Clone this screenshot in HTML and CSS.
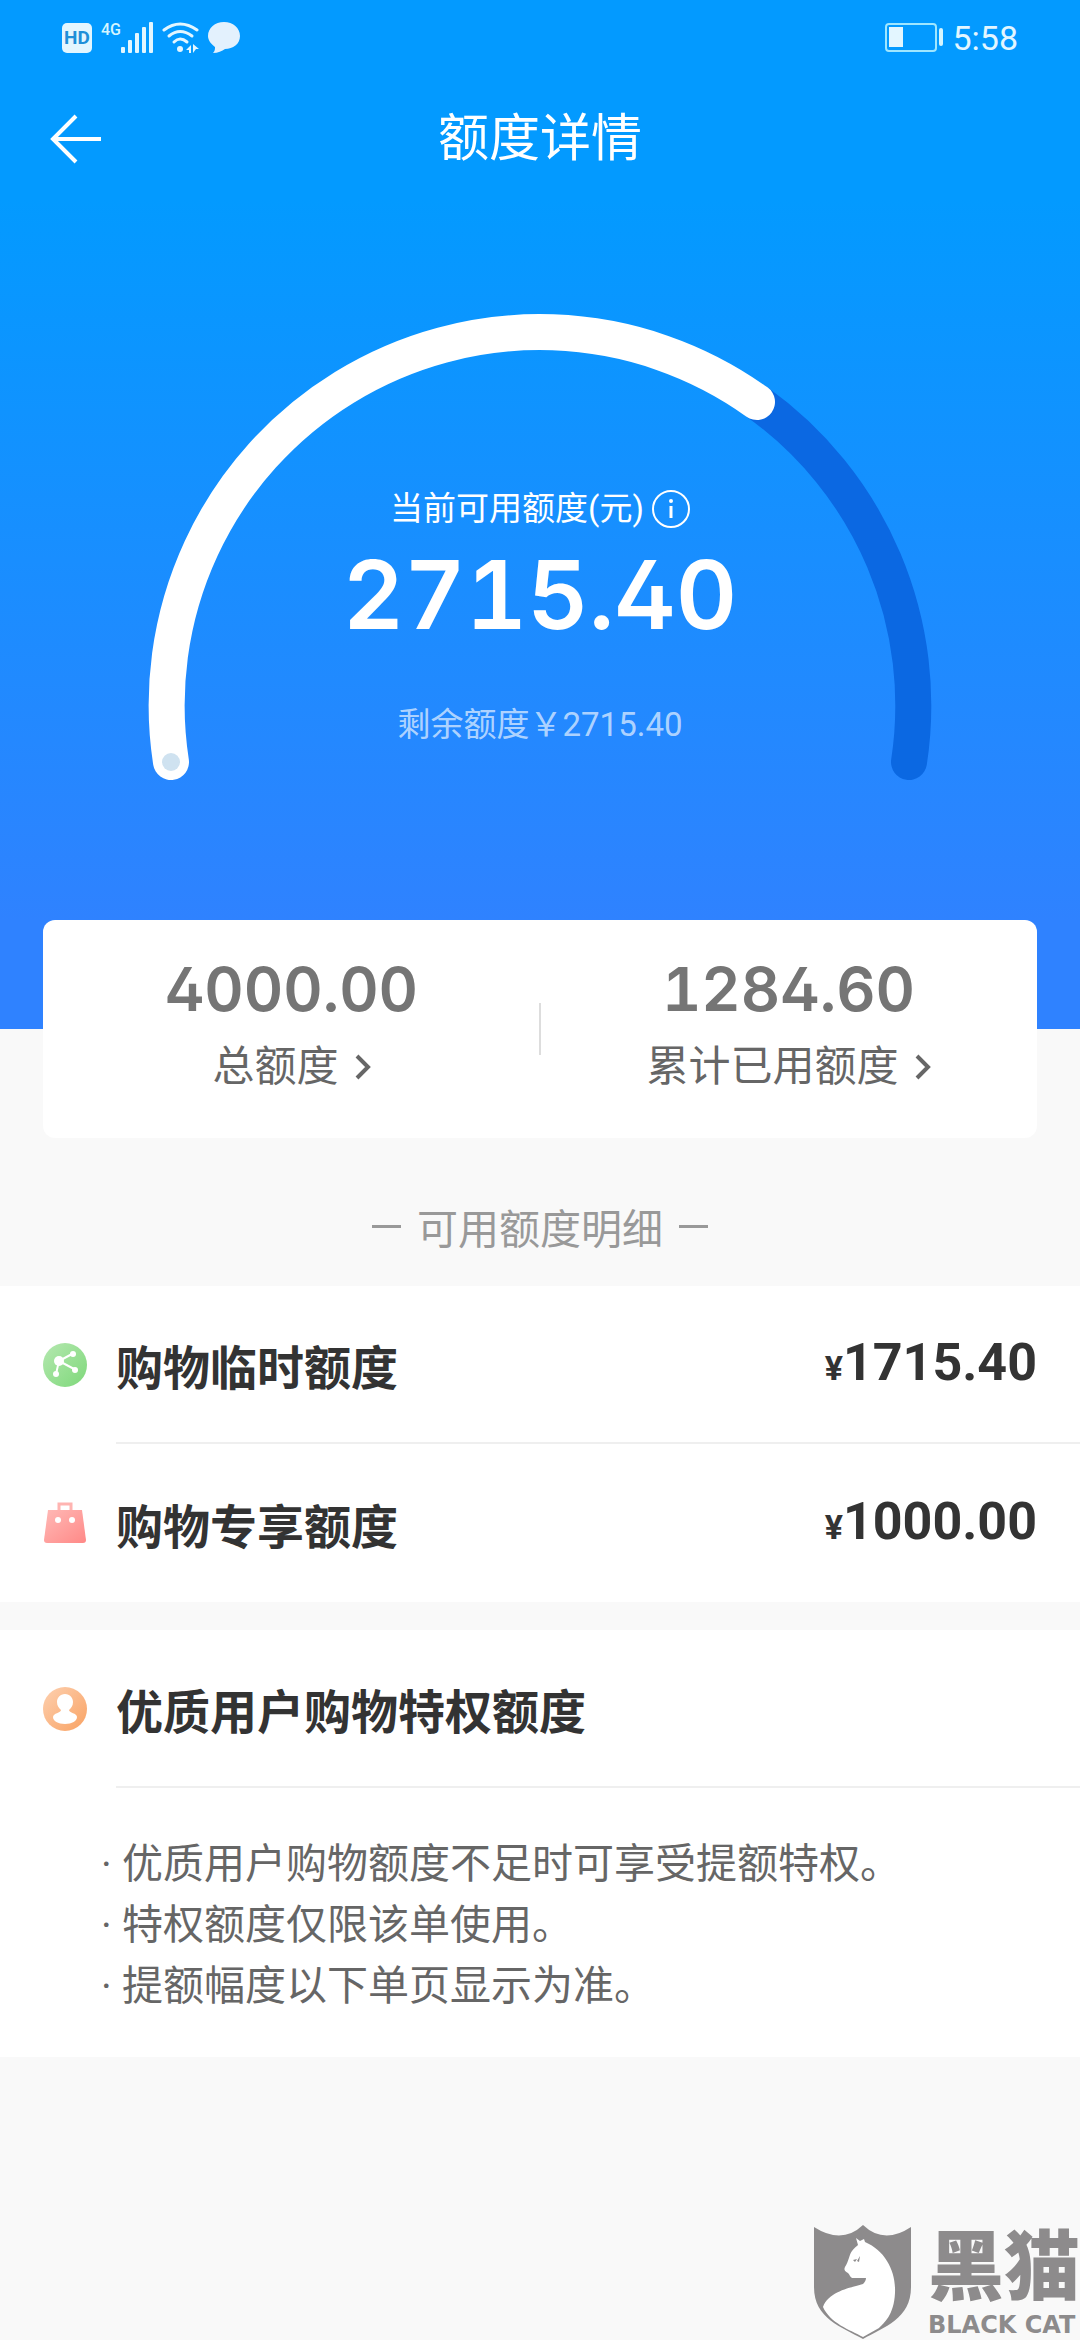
FILE: index.html
```html
<!DOCTYPE html>
<html lang="zh-CN">
<head>
    <meta charset="UTF-8">
    <meta name="viewport" content="width=device-width, initial-scale=1.0">
    <title>额度详情</title>
    <link rel="stylesheet" href="styles.css">
</head>
<body>
    <header class="hero">
        <div class="status-bar">
            <div class="status-icons">
                <span class="hd">HD</span>
                <span class="network">4G</span>
                <svg class="signal" width="33" height="32" viewBox="0 0 33 32" fill="#e3f6ff">
                    <rect x="0" y="25" width="4" height="6" rx="1"/>
                    <rect x="7" y="18" width="4" height="13" rx="1"/>
                    <rect x="14" y="11" width="4" height="20" rx="1"/>
                    <rect x="21" y="5" width="4" height="26" rx="1"/>
                    <rect x="28" y="0" width="4" height="31" rx="1"/>
                </svg>
                <svg class="wifi" width="38" height="32" viewBox="0 0 38 32" fill="none" stroke="#e3f6ff" stroke-width="3" stroke-linecap="round">
                    <path d="M2 8Q18 -4 35 8"/>
                    <path d="M7 14Q18 5 30 14"/>
                    <path d="M12 20Q18 14 25 20"/>
                    <circle cx="18" cy="27" r="3" fill="#e3f6ff" stroke="none"/>
                    <path d="M24 28l5 -5v8h-2v-3zM31 22l6 5h-3l-3 4z" fill="#e3f6ff" stroke="none"/>
                </svg>
                <svg class="bubble" width="32" height="32" viewBox="0 0 32 32" fill="#e3f1fd">
                    <path d="M16 0C25 0 32 6 32 14S25 27 17 27C14 29 10 31 5 31C7 29 7 27 7 25C3 22 0 18 0 14C0 6 7 0 16 0z"/>
                </svg>
            </div>
            <div class="status-right">
                <svg width="59" height="30" viewBox="0 0 59 30">
                    <rect x="1" y="1" width="50" height="27" rx="3" fill="none" stroke="#9fe6ff" stroke-width="2"/>
                    <rect x="4" y="4" width="14" height="20" fill="#e3f6ff"/>
                    <rect x="54" y="5" width="4" height="18" rx="2" fill="#d5f5ff"/>
                </svg>
                <span>5:58</span>
            </div>
        </div>

        <nav class="nav">
            <button class="back" aria-label="返回">
                <svg width="52" height="50" viewBox="0 0 52 50" fill="none" stroke="#fff" stroke-width="4">
                    <path d="M26 2L3 25L26 48M3 25H51"/>
                </svg>
            </button>
            <h1>额度详情</h1>
        </nav>

        <section class="gauge">
            <svg class="gauge-arc" viewBox="0 0 782 466" fill="none" stroke-width="36" stroke-linecap="round">
                <path d="M608 87A373 373 0 0 1 760 447" stroke="#0b68e2"/>
                <path d="M22 447A373 373 0 0 1 608 87" stroke="#fff"/>
                <circle cx="22" cy="447" r="9" fill="#cfe2f0"/>
            </svg>
            <div class="gauge-text">
                <div class="gauge-label">
                    当前可用额度(元)
                    <button class="info" aria-label="说明">
                        <svg width="38" height="38" viewBox="0 0 38 38" fill="none" stroke="#fff" stroke-width="2">
                            <circle cx="19" cy="19" r="18"/>
                            <path d="M19 16V28" stroke-width="3"/>
                            <circle cx="19" cy="11" r="2" fill="#fff" stroke="none"/>
                        </svg>
                    </button>
                </div>
                <div class="gauge-value">2715.40</div>
                <div class="gauge-rest">剩余额度￥2715.40</div>
            </div>
        </section>
    </header>

    <section class="summary">
        <a class="summary-item" href="#total">
            <span class="summary-value">4000.00</span>
            <span class="summary-label">总额度
                <svg width="16" height="26" viewBox="0 0 16 26" fill="none" stroke="#666" stroke-width="4"><path d="M2 2L13 13L2 24"/></svg>
            </span>
        </a>
        <a class="summary-item" href="#used">
            <span class="summary-value">1284.60</span>
            <span class="summary-label">累计已用额度
                <svg width="16" height="26" viewBox="0 0 16 26" fill="none" stroke="#666" stroke-width="4"><path d="M2 2L13 13L2 24"/></svg>
            </span>
        </a>
    </section>

    <h2 class="section-title">可用额度明细</h2>

    <section class="group">
        <div class="row">
            <svg class="row-icon" viewBox="0 0 44 44">
                <defs>
                    <linearGradient id="green" x1="0" y1="0" x2="1" y2="1">
                        <stop offset="0" stop-color="#b5e8b0"/>
                        <stop offset="1" stop-color="#7ed87a"/>
                    </linearGradient>
                </defs>
                <circle cx="22" cy="22" r="22" fill="url(#green)"/>
                <path d="M16 18L29 11M16 18L33 27M16 18L13 31" stroke="#fff" stroke-width="2"/>
                <g fill="#fff">
                    <circle cx="16" cy="18" r="5"/>
                    <circle cx="30" cy="11" r="3"/>
                    <circle cx="32" cy="27" r="3"/>
                    <circle cx="13" cy="31" r="3"/>
                </g>
            </svg>
            <div class="row-body">
                <span class="row-name">购物临时额度</span>
                <span class="amount"><small>¥</small>1715.40</span>
            </div>
        </div>
        <div class="row">
            <svg class="row-icon" viewBox="0 0 44 44">
                <defs>
                    <linearGradient id="red" x1="0" y1="0" x2="1" y2="1">
                        <stop offset="0" stop-color="#ffb9b6"/>
                        <stop offset="1" stop-color="#ff8987"/>
                    </linearGradient>
                </defs>
                <path d="M16 11V3H28V11" fill="none" stroke="#ffb4b1" stroke-width="3"/>
                <path d="M5 9H39L43 39Q43 42 40 42H4Q1 42 1 39z" fill="url(#red)"/>
                <circle cx="15" cy="19" r="3" fill="#fff"/>
                <circle cx="29" cy="19" r="3" fill="#fff"/>
            </svg>
            <div class="row-body">
                <span class="row-name">购物专享额度</span>
                <span class="amount"><small>¥</small>1000.00</span>
            </div>
        </div>
    </section>

    <section class="group">
        <div class="row">
            <svg class="row-icon" viewBox="0 0 44 44">
                <defs>
                    <linearGradient id="orange" x1="0" y1="0" x2="1" y2="1">
                        <stop offset="0" stop-color="#fdd0b0"/>
                        <stop offset="1" stop-color="#f9a263"/>
                    </linearGradient>
                </defs>
                <circle cx="22" cy="22" r="22" fill="url(#orange)"/>
                <path d="M22 7C27 7 30 11 30 15C30 19 28 21 26 23C26 26 34 26 34 30C34 34 29 37 22 37S10 34 10 30C10 26 18 26 18 23C16 21 14 19 14 15C14 11 17 7 22 7z" fill="#fff"/>
            </svg>
            <div class="row-body">
                <span class="row-name">优质用户购物特权额度</span>
            </div>
        </div>
        <ul class="notes">
            <li>优质用户购物额度不足时可享受提额特权。</li>
            <li>特权额度仅限该单使用。</li>
            <li>提额幅度以下单页显示为准。</li>
        </ul>
    </section>

    <footer class="brand">
        <svg width="98" height="115" viewBox="0 0 98 115">
            <path d="M0 2Q28 20 49 0Q70 20 97 2V62C97 94 70 102 49 114C28 102 0 94 0 62z" fill="#8d8b8c"/>
            <path d="M42 13L46 16L50 14L51 17C72 26 82 47 81 68C80 90 70 98 65 103L49 112C36 105 16 98 9 82C15 65 41 62 49 59C51 57 52 55 52 53H38C36 52 36 50 34 48C30 46 30 44 31 42C35 36 35 30 38 26C40 23 43 21 44 20z" fill="#fff"/>
            <path d="M39 35L43 34L41 37zM43 36L46 31L45 37z" fill="#8d8b8c"/>
        </svg>
        <div class="brand-text">
            <strong>黑猫</strong>
            <span>BLACK CAT</span>
        </div>
    </footer>
</body>
</html>
```

FILE: styles.css
```css
* {
    box-sizing: border-box;
}
body {
    font-family: Roboto, "Noto Sans CJK SC", sans-serif;
    background-color: #f9f9f9;
    color: #333;
    margin: 0;
    min-height: 100vh;
    display: flex;
    flex-direction: column;
}
button {
    padding: 0;
    border: none;
    background: none;
    cursor: pointer;
}
svg {
    display: block;
    flex-shrink: 0;
}

/* header */
.hero {
    background: linear-gradient(#039aff 200px, #2f82ff 920px);
    color: white;
    padding-bottom: 248px;
}
.status-bar {
    display: flex;
    align-items: center;
    justify-content: space-between;
    height: 76px;
    padding: 0 62px;
}
.status-icons {
    display: flex;
    align-items: center;
}
.hd {
    width: 30px;
    border-radius: 5px;
    background-color: #e3f6ff;
    color: #1f8fd8;
    font-size: 19px;
    font-weight: bold;
    line-height: 30px;
    text-align: center;
}
.network {
    align-self: flex-start;
    margin-left: 9px;
    color: #d5f5ff;
    font-size: 16px;
    font-weight: 500;
    line-height: 16px;
}
.wifi,
.bubble {
    margin-left: 8px;
}
.status-right {
    display: flex;
    align-items: center;
    gap: 8px;
    color: #e3f6ff;
    font-size: 34px;
}
.nav {
    display: grid;
    grid-template-columns: 52px 1fr 52px;
    align-items: center;
    height: 126px;
    padding: 0 50px;
}
.nav h1 {
    margin: 0;
    font-size: 51px;
    font-weight: normal;
    line-height: 64px;
    text-align: center;
}

/* gauge */
.gauge {
    display: grid;
    max-width: 782px;
    margin: 113px auto 0;
}
.gauge-arc,
.gauge-text {
    grid-area: 1 / 1;
}
.gauge-arc {
    width: 100%;
    overflow: visible;
}
.gauge-text {
    display: flex;
    flex-direction: column;
    align-items: center;
    padding-top: 172px;
    font-size: 33px;
    line-height: 44px;
}
.gauge-label {
    display: flex;
    align-items: center;
    gap: 8px;
}
.gauge-value,
.summary-value {
    font-family: Inter, sans-serif;
    font-weight: 600;
    font-feature-settings: "tnum", "cv02";
}
.gauge-value {
    margin: 16px 0 60px;
    font-size: 95px;
    line-height: 96px;
}
.gauge-rest {
    color: rgba(255, 255, 255, 0.65);
}

/* totals card */
.summary {
    display: grid;
    grid-template-columns: 1fr 1fr;
    margin: -109px 43px 0;
    border-radius: 12px;
    background: linear-gradient(#ddd, #ddd) center / 2px 52px no-repeat white;
}
.summary-item {
    display: flex;
    flex-direction: column;
    align-items: center;
    height: 218px;
    padding-top: 38px;
    color: #666;
    text-decoration: none;
}
.summary-value {
    color: #757575;
    font-size: 61px;
    line-height: 62px;
}
.summary-label {
    display: flex;
    align-items: center;
    gap: 16px;
    margin-top: 16px;
    font-size: 42px;
    line-height: 62px;
}

.section-title {
    display: flex;
    align-items: center;
    justify-content: center;
    gap: 16px;
    height: 148px;
    margin: 0;
    padding-top: 28px;
    color: #999;
    font-size: 41px;
    font-weight: normal;
}
.section-title::before,
.section-title::after {
    content: "";
    width: 29px;
    height: 3px;
    background-color: #999;
}

/* detail rows */
.group {
    margin-bottom: 28px;
    background-color: white;
}
.row {
    display: flex;
    align-items: center;
    gap: 29px;
    padding-left: 43px;
}
.row-icon {
    width: 44px;
    height: 44px;
}
.row-body {
    flex: 1;
    display: flex;
    align-items: center;
    justify-content: space-between;
    height: 158px;
    padding-right: 43px;
    border-bottom: 2px solid #efefef;
}
.row:last-child .row-body {
    border-bottom: none;
}
.row-name {
    font-size: 47px;
    font-weight: bold;
}
.amount {
    font-size: 52px;
    font-weight: bold;
    padding-bottom: 4px;
}
.amount small {
    font-size: 34px;
}
.notes {
    list-style: none;
    margin: 0;
    padding: 46px 43px 40px 101px;
    color: #666;
    font-size: 41px;
    line-height: 61px;
}
.notes li::before {
    content: "· ";
}

.brand {
    display: flex;
    align-items: flex-end;
    justify-content: flex-end;
    gap: 16px;
    margin-top: auto;
    color: #8d8b8c;
}
.brand-text {
    display: flex;
    flex-direction: column;
}
.brand-text strong {
    margin-bottom: 4px;
    font-size: 76px;
    font-weight: 900;
    line-height: 76px;
}
.brand-text span {
    font-family: "DejaVu Sans", sans-serif;
    font-size: 24px;
    font-weight: bold;
    line-height: 30px;
}
```
